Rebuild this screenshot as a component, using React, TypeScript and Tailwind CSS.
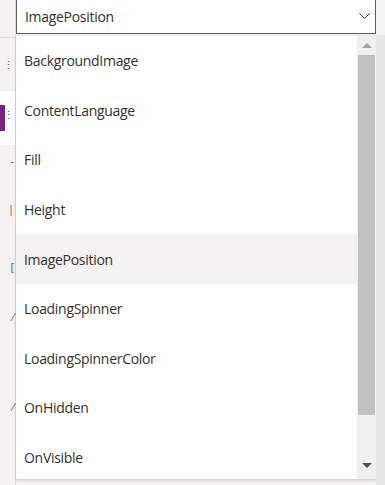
import React from "react";

const options = [
  "BackgroundImage",
  "ContentLanguage",
  "Fill",
  "Height",
  "ImagePosition",
  "LoadingSpinner",
  "LoadingSpinnerColor",
  "OnHidden",
  "OnVisible",
];

function Chevron() {
  return (
    <svg width="11" height="7" viewBox="0 0 11 7" fill="none">
      <path d="M0.5 0.5 L5.5 5.5 L10.5 0.5" stroke="#323130" strokeWidth="1" />
    </svg>
  );
}

function Rail() {
  // glyphs of the property pane behind the open list, mostly covered
  const marks = ["⋮", "⋮", "-", "|", "[", "⁄", "", "⁄", ""];
  return (
    <div className="w-[16px] shrink-0 flex flex-col border-r border-[#e1dfdd]">
      <div className="h-[38px] border-b border-[#e1dfdd]" />
      <div className="h-[53px]" />
      <div className="h-[54px] bg-white flex items-center">
        <div className="w-[5px] h-[26px] bg-[#742774]" />
      </div>
      <div className="relative flex-1">
        {marks.map((m, i) => (
          <div
            key={i}
            className="absolute right-[1px] text-[11px] leading-none text-[#605e5c]"
            style={{ top: [-86, -36, 10, 58, 116, 166, 0, 256, 0][i] }}
          >
            {m}
          </div>
        ))}
      </div>
    </div>
  );
}

export default function App() {
  return (
    <div
      className="relative w-[385px] h-[485px] overflow-hidden bg-[#f3f2f1] flex"
      style={{ fontFamily: '"Segoe UI", "Open Sans", "Noto Sans", sans-serif' }}
    >
      <Rail />
      <div className="flex-1 flex flex-col">
        <div className="flex">
          <div className="w-[360px] h-[35px] -mt-[1px] bg-white border border-[#605e5c] flex items-center justify-between pl-[8px] pr-[5px]">
            <span className="text-[14px] tracking-[-0.3px] text-[#323130]">ImagePosition</span>
            <Chevron />
          </div>
          <div className="flex-1 bg-[#f3f3f3]" />
        </div>
      </div>

      {/* open list */}
      <div className="absolute left-[16px] top-[36px] w-[360px] h-[443px] bg-white flex shadow-[0_1px_3px_rgba(0,0,0,0.18)]">
        <ul className="flex-1 flex flex-col">
          {options.map((o) => (
            <li
              key={o}
              className={`h-[49.6px] shrink-0 flex items-center pl-[8px] text-[14px] tracking-[-0.3px] text-[#323130] ${
                o === "ImagePosition" ? "bg-[#f3f2f1]" : ""
              }`}
            >
              {o}
            </li>
          ))}
        </ul>
        <div className="w-[19px] bg-[#f0f0f0] flex flex-col items-center">
          <div className="h-[19px] flex items-center justify-center">
            <div className="w-0 h-0 border-l-[5px] border-r-[5px] border-b-[5px] border-l-transparent border-r-transparent border-b-[#a3a3a3]" />
          </div>
          <div className="w-[17px] h-[360px] bg-[#c1c1c1]" />
          <div className="flex-1" />
          <div className="h-[19px] flex items-center justify-center mb-[4px]">
            <div className="w-0 h-0 border-l-[5px] border-r-[5px] border-t-[5px] border-l-transparent border-r-transparent border-t-[#505050]" />
          </div>
        </div>
      </div>
      <div className="absolute right-0 top-[35px] w-[9px] h-[450px] bg-[#e6e6e6]" />
    </div>
  );
}
